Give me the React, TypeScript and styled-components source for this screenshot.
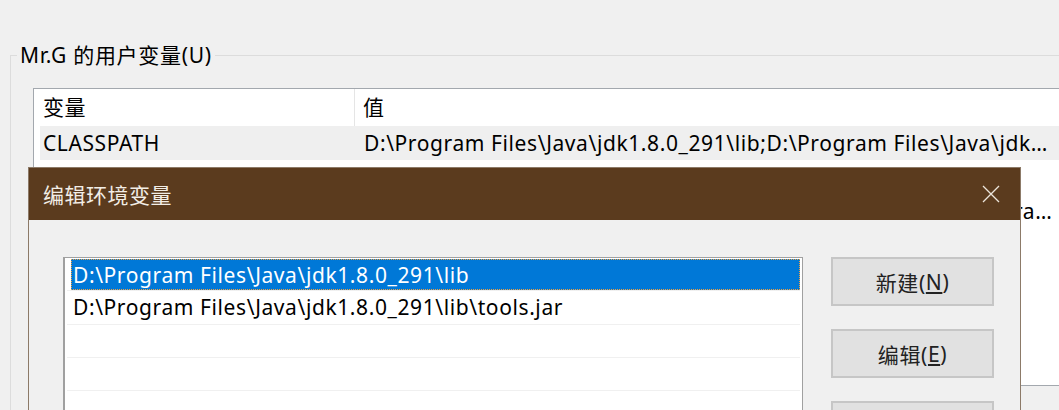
import React from 'react';
import styled, { createGlobalStyle } from 'styled-components';

const GlobalStyle = createGlobalStyle`
  html, body {
    margin: 0;
    padding: 0;
    background: #f0f0f0;
  }
  body {
    font-family: "Noto Sans", "Noto Sans CJK SC", sans-serif;
    font-size: 21px;
    letter-spacing: 0.6px;
    color: #000;
  }
`;

const Page = styled.div`
  position: relative;
  width: 1059px;
  height: 410px;
  overflow: hidden;
  padding-top: 41px;
  box-sizing: border-box;
`;

const GroupBox = styled.fieldset`
  margin: 0 0 0 10px;
  width: 1120px;
  min-height: 420px;
  padding: 0 0 0 6px;
  border: 1px solid #dcdcdc;
  border-right: none;
  box-sizing: border-box;
`;

const GroupLabel = styled.legend`
  padding: 0 3px;
  font-size: 21px;
  line-height: 28px;
  letter-spacing: 0.7px;
`;

const Table = styled.div`
  margin: 19px 0 0 16px;
  width: 1028px;
  height: 298px;
  background: #fff;
  border: 1px solid #a3a8ae;
  box-sizing: border-box;
`;

const HeaderRow = styled.div`
  display: grid;
  grid-template-columns: 321px 1fr;
  height: 37px;
`;

const HeaderCell = styled.div`
  padding-left: 9px;
  line-height: 37px;
  & + & {
    padding-left: 8px;
  }
  &:first-child {
    border-right: 1px solid #e5e5e5;
  }
`;

const BodyRow = styled.div<{ $active?: boolean }>`
  display: grid;
  grid-template-columns: 315px minmax(0, 1fr);
  margin-left: 6px;
  height: 34px;
  line-height: 34px;
  background: ${p => (p.$active ? '#efefef' : 'transparent')};
`;

const Cell = styled.div`
  padding-left: 3px;
  white-space: nowrap;
  overflow: hidden;
  text-overflow: ellipsis;
  & + & {
    padding-left: 9px;
    padding-right: 3px;
  }
`;

const Dialog = styled.div`
  position: absolute;
  left: 28px;
  top: 167px;
  width: 993px;
  height: 280px;
  border: 1px solid #8c7a68;
  background: #f0f0f0;
  box-sizing: border-box;
  display: flex;
  flex-direction: column;
`;

const TitleBar = styled.div`
  display: flex;
  align-items: center;
  justify-content: space-between;
  height: 52px;
  flex: none;
  padding-left: 14px;
  background: #5b3b1e;
  color: #f2ede6;
  font-size: 21px;
  letter-spacing: 0.5px;
`;

const CloseButton = styled.div`
  width: 58px;
  height: 100%;
  display: flex;
  align-items: center;
  justify-content: center;
`;

const DialogBody = styled.div`
  display: flex;
  align-items: flex-start;
  gap: 28px;
  padding: 37px 0 0 34px;
`;

const ListBox = styled.div`
  width: 740px;
  height: 220px;
  flex: none;
  padding: 0 2px;
  border: 1px solid #a0a0a0;
  border-left-width: 2px;
  background: #fff;
  box-sizing: border-box;
`;

const ListItem = styled.div`
  display: flex;
  height: 33.33px;
  border-bottom: 1px solid #f0f0f0;
  box-sizing: border-box;
`;

const ItemText = styled.div<{ $selected?: boolean }>`
  flex: 1;
  margin: ${p => (p.$selected ? '1px 0 0 4px' : '0 0 0 4px')};
  padding-left: 2px;
  line-height: 32px;
  white-space: nowrap;
  color: ${p => (p.$selected ? '#fff' : '#000')};
  background: ${p => (p.$selected ? '#0078d7' : 'transparent')};
  outline: ${p => (p.$selected ? '1px dotted #f0a040' : 'none')};
  outline-offset: -1px;
`;

const ButtonColumn = styled.div`
  display: flex;
  flex-direction: column;
  gap: 23px;
`;

const Button = styled.div`
  width: 163px;
  height: 49px;
  display: flex;
  align-items: center;
  justify-content: center;
  background: #e1e1e1;
  border: 2px solid #c6c6c6;
  box-sizing: border-box;
  color: #222;
  font-size: 21px;
`;

const variables = [
  {
    name: 'CLASSPATH',
    value:
      'D:\\Program Files\\Java\\jdk1.8.0_291\\lib;D:\\Program Files\\Java\\jdk1.8.0_291\\lib\\tools.jar',
    active: true,
  },
  { name: 'JAVA_HOME', value: 'D:\\Program Files\\Java\\jdk1.8.0_291' },
  {
    name: 'Path',
    value:
      'C:\\Users\\Mr.G\\AppData\\Local\\Microsoft\\WindowsApps;D:\\Program Files\\JetBrains\\IntelliJ IDEA Community Edition 2021.1.1\\bin;D:\\Program Files\\Microsoft VS Code\\bin',
  },
  { name: 'TEMP', value: '%USERPROFILE%\\AppData\\Local\\Temp' },
  { name: 'TMP', value: '%USERPROFILE%\\AppData\\Local\\Temp' },
  { name: 'OneDrive', value: 'C:\\Users\\Mr.G\\OneDrive' },
];

const entries = [
  'D:\\Program Files\\Java\\jdk1.8.0_291\\lib',
  'D:\\Program Files\\Java\\jdk1.8.0_291\\lib\\tools.jar',
  '',
  '',
  '',
  '',
];

const App: React.FC = () => (
  <Page>
    <GlobalStyle />
    <GroupBox>
      <GroupLabel>Mr.G 的用户变量(U)</GroupLabel>
      <Table>
        <HeaderRow>
          <HeaderCell>变量</HeaderCell>
          <HeaderCell>值</HeaderCell>
        </HeaderRow>
        {variables.map(v => (
          <BodyRow key={v.name} $active={v.active}>
            <Cell>{v.name}</Cell>
            <Cell>{v.value}</Cell>
          </BodyRow>
        ))}
      </Table>
    </GroupBox>

    <Dialog>
      <TitleBar>
        编辑环境变量
        <CloseButton>
          <svg width="18" height="18" viewBox="0 0 18 18">
            <path d="M1 1 L17 17 M17 1 L1 17" stroke="#ece5dc" strokeWidth="1.3" />
          </svg>
        </CloseButton>
      </TitleBar>
      <DialogBody>
        <ListBox>
          {entries.map((e, i) => (
            <ListItem key={i}>
              <ItemText $selected={i === 0}>{e}</ItemText>
            </ListItem>
          ))}
        </ListBox>
        <ButtonColumn>
          <Button>
            新建(<u>N</u>)
          </Button>
          <Button>
            编辑(<u>E</u>)
          </Button>
          <Button>
            浏览(<u>B</u>)...
          </Button>
        </ButtonColumn>
      </DialogBody>
    </Dialog>
  </Page>
);

export default App;
